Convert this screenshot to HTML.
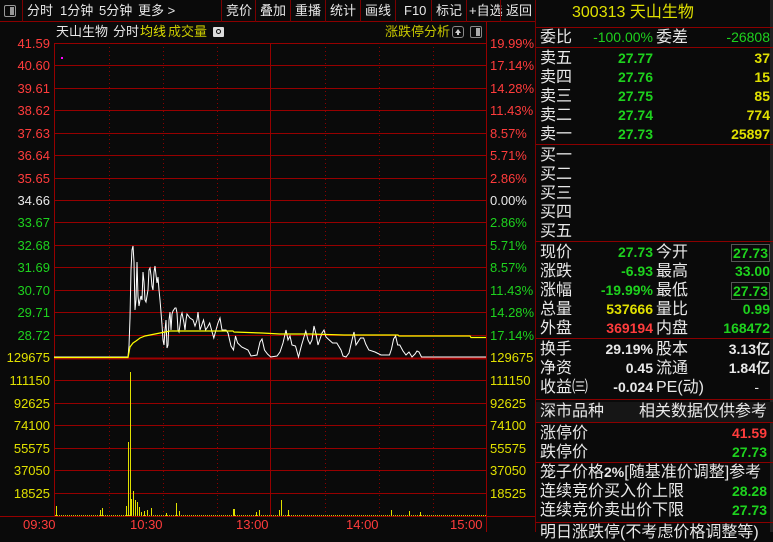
<!DOCTYPE html>
<html><head><meta charset="utf-8"><style>
*{margin:0;padding:0;box-sizing:border-box}
body{width:773px;height:532px;background:#0a0a0a;overflow:hidden;position:relative;font-family:"Liberation Sans","Noto Sans CJK SC",sans-serif;color:#e0e0e0}
.t{position:absolute;white-space:nowrap;line-height:1}
.r{color:#ff3c3c}.g{color:#1ed21e}.y{color:#e0e000}.w{color:#e8e8e8}.c{color:#00e0e0}
.lab{position:absolute;font-size:13px;line-height:13px;white-space:nowrap}
.P{left:490px}
.rp{position:absolute;left:536px;width:237px;font-size:16px}
.row{position:absolute;left:0;width:237px;height:19px;font-size:16px;line-height:19px}
.row span{position:absolute;white-space:nowrap}
.hl{position:absolute;height:1px;background:#8b0000;left:536px;width:237px}
.tb{position:absolute;top:4px;font-size:13px;line-height:14px;color:#e8e8e8;white-space:nowrap}
.sep{position:absolute;top:0;width:1px;height:22px;background:#7a0000}
</style></head><body>
<div style="position:absolute;left:0;top:21px;width:536px;height:1px;background:#8b0000"></div>
<div style="position:absolute;left:4px;top:5px;width:12px;height:12px;border:1px solid #999;border-radius:2px"><div style="position:absolute;right:1px;top:1px;width:4px;height:8px;background:#999"></div></div>
<div class="sep" style="left:22px"></div>
<div class="tb c" style="left:27px">分时</div>
<div class="tb" style="left:60px">1分钟</div>
<div class="tb" style="left:99px">5分钟</div>
<div class="tb" style="left:138px">更多 &gt;</div>
<div class="sep" style="left:221px"></div><div class="tb" style="left:226px">竞价</div>
<div class="sep" style="left:255px"></div><div class="tb" style="left:260px">叠加</div>
<div class="sep" style="left:290px"></div><div class="tb" style="left:295px">重播</div>
<div class="sep" style="left:325px"></div><div class="tb" style="left:330px">统计</div>
<div class="sep" style="left:360px"></div><div class="tb" style="left:365px">画线</div>
<div class="sep" style="left:395px"></div><div class="tb" style="left:404px">F10</div>
<div class="sep" style="left:431px"></div><div class="tb" style="left:436px">标记</div>
<div class="sep" style="left:466px"></div><div class="tb" style="left:469px">+自选</div>
<div class="sep" style="left:500px"></div><div class="tb" style="left:506px">返回</div>
<div class="sep" style="left:535px;height:532px"></div>
<div class="t w" style="left:56px;top:25px;font-size:13px">天山生物</div>
<div class="t w" style="left:113px;top:25px;font-size:13px">分时</div>
<div class="t y" style="left:140px;top:25px;font-size:13px">均线</div>
<div class="t" style="left:168px;top:25px;font-size:13px;color:#c8c800">成交量</div>
<div style="position:absolute;left:213px;top:27px;width:11px;height:10px;background:#ddd;border-radius:1px"><div style="position:absolute;left:3px;top:2px;width:5px;height:5px;border-radius:50%;background:#0a0a0a"></div><div style="position:absolute;left:4px;top:3px;width:3px;height:3px;border-radius:50%;background:#ddd"></div></div>
<div class="t" style="left:385px;top:25px;font-size:13px;color:#c8c800">涨跌停分析</div>
<div style="position:absolute;left:452px;top:26px;width:12px;height:12px;border:1px solid #888;border-radius:3px"><div style="position:absolute;left:2px;top:2px;border-left:3px solid transparent;border-right:3px solid transparent;border-bottom:4px solid #ccc"></div><div style="position:absolute;left:4px;top:5px;width:2px;height:3px;background:#ccc"></div></div>
<div style="position:absolute;left:470px;top:26px;width:12px;height:12px;border:1px solid #888;border-radius:2px"><div style="position:absolute;right:1px;top:1px;width:4px;height:8px;background:#aaa"></div></div>

<svg width="773" height="532" style="position:absolute;left:0;top:0">
<g stroke="#960000" stroke-width="1" shape-rendering="crispEdges">
<line x1="54" y1="43.5" x2="486" y2="43.5"/>
<line x1="54" y1="65.5" x2="486" y2="65.5"/><line x1="54" y1="88.5" x2="486" y2="88.5"/><line x1="54" y1="110.5" x2="486" y2="110.5"/><line x1="54" y1="133.5" x2="486" y2="133.5"/><line x1="54" y1="155.5" x2="486" y2="155.5"/><line x1="54" y1="178.5" x2="486" y2="178.5"/><line x1="54" y1="200.5" x2="486" y2="200.5"/><line x1="54" y1="222.5" x2="486" y2="222.5"/><line x1="54" y1="245.5" x2="486" y2="245.5"/><line x1="54" y1="267.5" x2="486" y2="267.5"/><line x1="54" y1="290.5" x2="486" y2="290.5"/><line x1="54" y1="312.5" x2="486" y2="312.5"/><line x1="54" y1="335.5" x2="486" y2="335.5"/>
<line x1="54" y1="380.5" x2="486" y2="380.5"/><line x1="54" y1="403.5" x2="486" y2="403.5"/><line x1="54" y1="425.5" x2="486" y2="425.5"/><line x1="54" y1="448.5" x2="486" y2="448.5"/><line x1="54" y1="470.5" x2="486" y2="470.5"/><line x1="54" y1="493.5" x2="486" y2="493.5"/>
<line x1="0" y1="516.5" x2="535" y2="516.5"/>
<line x1="54.5" y1="43" x2="54.5" y2="516"/>
<line x1="270.5" y1="43" x2="270.5" y2="516"/>
<line x1="486.5" y1="22" x2="486.5" y2="532"/>
</g>
<line x1="54" y1="358.5" x2="486" y2="358.5" stroke="#a00000" stroke-width="2"/>
<g stroke="#8b0000" stroke-dasharray="1 3" shape-rendering="crispEdges">
<line x1="109.5" y1="43" x2="109.5" y2="516"/><line x1="163.5" y1="43" x2="163.5" y2="516"/><line x1="217.5" y1="43" x2="217.5" y2="516"/><line x1="325.5" y1="43" x2="325.5" y2="516"/><line x1="379.5" y1="43" x2="379.5" y2="516"/><line x1="433.5" y1="43" x2="433.5" y2="516"/>
</g>
<rect x="61" y="57" width="2" height="2" fill="#ff00ff"/>
<polyline fill="none" stroke="#fff" stroke-width="1" points="54,357 128,357 129,346 130,318 131,270 132,250 133,246 134,262 135,310 136,300 137,262 138,296 139,306 140,300 141,296 142,300 143,272 144,282 145,300 146,302 147,296 148,290 149,270 150,268 151,275 152,286 153,290 154,272 155,266 156,275 157,283 158,277 159,290 160,300 161,312 162,325 163,340 164,345 165,330 166,320 167,348 168,345 169,320 170,312 171,330 172,314 173,311 175,308 176,308 177,313 178,330 179,332 180,325 181,316 182,313 183,318 184,323 185,330 186,320 187,314 190,318 193,320 195,326 197,320 198,312 200,330 203.5,320 205.6,330 207.6,327 209.7,323 211.8,331 213.8,338 216,330 218,323 220,318 222,330 226,330 228,333 231,346 233.5,350 235.5,336 237.6,343 241.7,347 248,350 251,356 257,355 260,342 262,339 264.5,350 267.5,354 270.7,357 277,356 280,352 283,343 286,330 288,340 290,336 292,345 295.5,346 298.5,357 301.6,345 305.8,331 308,340 310,344 312,340 314,326 316,334 318,345 322,333 324,330 326,337 332.6,343 336.8,343 341,350 343,356 346,357 349,353 352,340 354,332 356,345 360.5,338 363.6,338 365.7,344 368.8,350 375,352 381,355 386,355 389.5,355 391.5,349 393.6,339 395.6,336 397.7,345 399.8,345 403,351 406,355 409,352 412,357 415,354 417,351 419,352 421.5,357 486,357"/>
<polyline fill="none" stroke="#ffff00" stroke-width="1.2" points="54,357.5 128,357.5 130,347 133,343 136,341 140,338 145,336 150,335 160,333 165,332 170,331 191,331 233,331 234,332 262,333 280,334 310,334 344,335 398,335 399,336 470,336 471,337.5 486,337.5"/>
<line x1="55" y1="515.5" x2="486" y2="515.5" stroke="#c8c800" stroke-width="1" stroke-dasharray="1 1"/>
<g stroke="#e0e000" stroke-width="1" shape-rendering="crispEdges">
<line x1="56.5" y1="516" x2="56.5" y2="506"/><line x1="100.5" y1="516" x2="100.5" y2="510"/><line x1="102.5" y1="516" x2="102.5" y2="508"/><line x1="126.5" y1="516" x2="126.5" y2="506"/><line x1="128.5" y1="516" x2="128.5" y2="442"/><line x1="130.5" y1="516" x2="130.5" y2="372"/><line x1="131.5" y1="516" x2="131.5" y2="499"/><line x1="133.5" y1="516" x2="133.5" y2="491"/><line x1="135.5" y1="516" x2="135.5" y2="500"/><line x1="137.5" y1="516" x2="137.5" y2="502"/><line x1="139.5" y1="516" x2="139.5" y2="507"/><line x1="141.5" y1="516" x2="141.5" y2="512"/><line x1="144.5" y1="516" x2="144.5" y2="511"/><line x1="147.5" y1="516" x2="147.5" y2="510"/><line x1="151.5" y1="516" x2="151.5" y2="508"/><line x1="166.5" y1="516" x2="166.5" y2="513"/><line x1="176.5" y1="516" x2="176.5" y2="503"/><line x1="179.5" y1="516" x2="179.5" y2="511"/><line x1="233.5" y1="516" x2="233.5" y2="509"/><line x1="234.5" y1="516" x2="234.5" y2="509"/><line x1="256.5" y1="516" x2="256.5" y2="512"/><line x1="259.5" y1="516" x2="259.5" y2="510"/><line x1="279.5" y1="516" x2="279.5" y2="510"/><line x1="281.5" y1="516" x2="281.5" y2="500"/><line x1="288.5" y1="516" x2="288.5" y2="510"/><line x1="391.5" y1="516" x2="391.5" y2="510"/><line x1="409.5" y1="516" x2="409.5" y2="511"/><line x1="420.5" y1="516" x2="420.5" y2="512"/>
</g>
</svg>

<div class="lab r" style="right:723px;top:37px">41.59</div>
<div class="lab r" style="right:723px;top:59px">40.60</div>
<div class="lab r" style="right:723px;top:82px">39.61</div>
<div class="lab r" style="right:723px;top:104px">38.62</div>
<div class="lab r" style="right:723px;top:127px">37.63</div>
<div class="lab r" style="right:723px;top:149px">36.64</div>
<div class="lab r" style="right:723px;top:172px">35.65</div>
<div class="lab w" style="right:723px;top:194px">34.66</div>
<div class="lab g" style="right:723px;top:216px">33.67</div>
<div class="lab g" style="right:723px;top:239px">32.68</div>
<div class="lab g" style="right:723px;top:261px">31.69</div>
<div class="lab g" style="right:723px;top:284px">30.70</div>
<div class="lab g" style="right:723px;top:306px">29.71</div>
<div class="lab g" style="right:723px;top:329px">28.72</div>
<div class="lab y" style="right:723px;top:351px">129675</div>
<div class="lab y" style="right:723px;top:374px">111150</div>
<div class="lab y" style="right:723px;top:397px">92625</div>
<div class="lab y" style="right:723px;top:419px">74100</div>
<div class="lab y" style="right:723px;top:442px">55575</div>
<div class="lab y" style="right:723px;top:464px">37050</div>
<div class="lab y" style="right:723px;top:487px">18525</div>
<div class="lab r P" style="top:37px">19.99%</div>
<div class="lab r P" style="top:59px">17.14%</div>
<div class="lab r P" style="top:82px">14.28%</div>
<div class="lab r P" style="top:104px">11.43%</div>
<div class="lab r P" style="top:127px">8.57%</div>
<div class="lab r P" style="top:149px">5.71%</div>
<div class="lab r P" style="top:172px">2.86%</div>
<div class="lab w P" style="top:194px">0.00%</div>
<div class="lab g P" style="top:216px">2.86%</div>
<div class="lab g P" style="top:239px">5.71%</div>
<div class="lab g P" style="top:261px">8.57%</div>
<div class="lab g P" style="top:284px">11.43%</div>
<div class="lab g P" style="top:306px">14.28%</div>
<div class="lab g P" style="top:329px">17.14%</div>
<div class="lab y P" style="top:351px">129675</div>
<div class="lab y P" style="top:374px">111150</div>
<div class="lab y P" style="top:397px">92625</div>
<div class="lab y P" style="top:419px">74100</div>
<div class="lab y P" style="top:442px">55575</div>
<div class="lab y P" style="top:464px">37050</div>
<div class="lab y P" style="top:487px">18525</div>
<div class="lab r" style="left:23px;top:518px">09:30</div>
<div class="lab r" style="left:130px;top:518px">10:30</div>
<div class="lab r" style="left:236px;top:518px">13:00</div>
<div class="lab r" style="left:346px;top:518px">14:00</div>
<div class="lab r" style="left:450px;top:518px">15:00</div>

<div style="position:absolute;left:770px;top:0;width:3px;height:532px;background:#222"></div>
<div class="t y" style="left:572px;top:5px;font-size:16px">300313 天山生物</div>
<div class="hl" style="top:27px"></div>
<div class="hl" style="top:47px"></div>
<div class="hl" style="top:144px"></div>
<div class="hl" style="top:241px"></div>
<div class="hl" style="top:338px"></div>
<div class="hl" style="top:399px"></div>
<div class="hl" style="top:422px"></div>
<div class="hl" style="top:462px"></div>
<div class="hl" style="top:522px"></div>
<div class="rp" style="top:0;height:532px">
<div class="row" style="top:28px"><span class="w" style="left:4px">委比</span><span class="g" style="right:120px;font-size:14px">-100.00%</span><span class="w" style="left:120px">委差</span><span class="g" style="right:3px;font-size:14px">-26808</span></div>
<div class="row" style="top:49px"><span class="w" style="left:4px">卖五</span><span class="g" style="right:120px;font-size:14px;font-weight:bold">27.77</span><span class="y" style="right:3px;font-size:14px;font-weight:bold">37</span></div>
<div class="row" style="top:68px"><span class="w" style="left:4px">卖四</span><span class="g" style="right:120px;font-size:14px;font-weight:bold">27.76</span><span class="y" style="right:3px;font-size:14px;font-weight:bold">15</span></div>
<div class="row" style="top:87px"><span class="w" style="left:4px">卖三</span><span class="g" style="right:120px;font-size:14px;font-weight:bold">27.75</span><span class="y" style="right:3px;font-size:14px;font-weight:bold">85</span></div>
<div class="row" style="top:106px"><span class="w" style="left:4px">卖二</span><span class="g" style="right:120px;font-size:14px;font-weight:bold">27.74</span><span class="y" style="right:3px;font-size:14px;font-weight:bold">774</span></div>
<div class="row" style="top:125px"><span class="w" style="left:4px">卖一</span><span class="g" style="right:120px;font-size:14px;font-weight:bold">27.73</span><span class="y" style="right:3px;font-size:14px;font-weight:bold">25897</span></div>
<div class="row" style="top:146px"><span class="w" style="left:4px">买一</span></div>
<div class="row" style="top:165px"><span class="w" style="left:4px">买二</span></div>
<div class="row" style="top:184px"><span class="w" style="left:4px">买三</span></div>
<div class="row" style="top:203px"><span class="w" style="left:4px">买四</span></div>
<div class="row" style="top:222px"><span class="w" style="left:4px">买五</span></div>
<div class="row" style="top:243px"><span class="w" style="left:4px">现价</span><span class="g" style="right:120px;font-size:14px;font-weight:bold">27.73</span><span class="w" style="left:120px">今开</span><span class="g" style="right:3px;font-size:14px;font-weight:bold;border:1px solid #555;padding:0 1px;line-height:16px;top:1px">27.73</span></div>
<div class="row" style="top:262px"><span class="w" style="left:4px">涨跌</span><span class="g" style="right:120px;font-size:14px;font-weight:bold">-6.93</span><span class="w" style="left:120px">最高</span><span class="g" style="right:3px;font-size:14px;font-weight:bold">33.00</span></div>
<div class="row" style="top:281px"><span class="w" style="left:4px">涨幅</span><span class="g" style="right:120px;font-size:14px;font-weight:bold">-19.99%</span><span class="w" style="left:120px">最低</span><span class="g" style="right:3px;font-size:14px;font-weight:bold;border:1px solid #555;padding:0 1px;line-height:16px;top:1px">27.73</span></div>
<div class="row" style="top:300px"><span class="w" style="left:4px">总量</span><span class="y" style="right:120px;font-size:14px;font-weight:bold">537666</span><span class="w" style="left:120px">量比</span><span class="g" style="right:3px;font-size:14px;font-weight:bold">0.99</span></div>
<div class="row" style="top:319px"><span class="w" style="left:4px">外盘</span><span class="r" style="right:120px;font-size:14px;font-weight:bold">369194</span><span class="w" style="left:120px">内盘</span><span class="g" style="right:3px;font-size:14px;font-weight:bold">168472</span></div>
<div class="row" style="top:340px"><span class="w" style="left:4px">换手</span><span class="w" style="right:120px;font-size:14px;font-weight:bold">29.19%</span><span class="w" style="left:120px">股本</span><span class="w" style="right:3px;font-size:14px;font-weight:bold">3.13亿</span></div>
<div class="row" style="top:359px"><span class="w" style="left:4px">净资</span><span class="w" style="right:120px;font-size:14px;font-weight:bold">0.45</span><span class="w" style="left:120px">流通</span><span class="w" style="right:3px;font-size:14px;font-weight:bold">1.84亿</span></div>
<div class="row" style="top:378px"><span class="w" style="left:4px">收益㈢</span><span class="w" style="right:120px;font-size:14px;font-weight:bold">-0.024</span><span class="w" style="left:120px">PE(动)</span><span class="w" style="right:14px;font-size:14px">-</span></div>
<div class="row" style="top:402px;background:#161616;height:20px"><span class="w" style="left:4px">深市品种</span><span class="w" style="right:6px">相关数据仅供参考</span></div>
<div class="row" style="top:424px"><span class="w" style="left:4px">涨停价</span><span class="r" style="right:6px;font-size:14px;font-weight:bold">41.59</span></div>
<div class="row" style="top:443px"><span class="w" style="left:4px">跌停价</span><span class="g" style="right:6px;font-size:14px;font-weight:bold">27.73</span></div>
<div class="row" style="top:463px"><span class="w" style="left:4px">笼子价格<b style="font-size:14px">2%</b>[随基准价调整]参考</span></div>
<div class="row" style="top:482px"><span class="w" style="left:4px">连续竞价买入价上限</span><span class="g" style="right:6px;font-size:14px;font-weight:bold">28.28</span></div>
<div class="row" style="top:501px"><span class="w" style="left:4px">连续竞价卖出价下限</span><span class="g" style="right:6px;font-size:14px;font-weight:bold">27.73</span></div>
<div class="row" style="top:523px"><span class="w" style="left:4px">明日涨跌停(不考虑价格调整等)</span></div>
</div>
</body></html>
